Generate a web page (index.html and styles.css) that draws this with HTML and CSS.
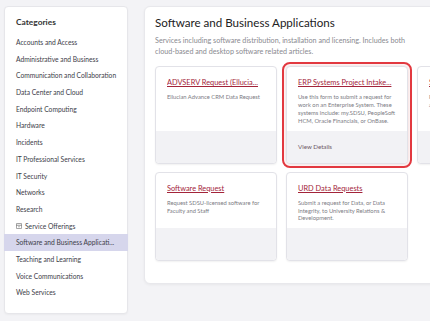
FILE: index.html
```html
<!DOCTYPE html>
<html>
<head>
<meta charset="utf-8">
<link rel="stylesheet" href="styles.css">
</head>
<body>
<div class="page">
  <aside class="sidebar">
    <h2 class="side-title">Categories</h2>
    <ul class="cat-list">
      <li class="cat">Accounts and Access</li>
      <li class="cat">Administrative and Business</li>
      <li class="cat">Communication and Collaboration</li>
      <li class="cat">Data Center and Cloud</li>
      <li class="cat">Endpoint Computing</li>
      <li class="cat">Hardware</li>
      <li class="cat">Incidents</li>
      <li class="cat">IT Professional Services</li>
      <li class="cat">IT Security</li>
      <li class="cat">Networks</li>
      <li class="cat">Research</li>
      <li class="cat"><svg class="cat-icon" viewBox="0 0 8 8" width="6" height="6"><rect x="0.5" y="0.5" width="7" height="7" rx="1" fill="none" stroke="#666" stroke-width="0.9"/><line x1="0.5" y1="3" x2="7.5" y2="3" stroke="#666" stroke-width="0.9"/><line x1="3" y1="5" x2="5" y2="5" stroke="#666" stroke-width="0.9"/></svg>Service Offerings</li>
      <li class="cat cat-active">Software and Business Applicati...</li>
      <li class="cat">Teaching and Learning</li>
      <li class="cat">Voice Communications</li>
      <li class="cat">Web Services</li>
    </ul>
  </aside>
  <main class="content">
    <h1 class="content-title">Software and Business Applications</h1>
    <p class="content-desc">Services including software distribution, installation and licensing. Includes both cloud-based and desktop software related articles.</p>
    <div class="grid">
      <div class="card">
        <div class="card-body">
          <a class="card-title">ADVSERV Request (Ellucia...</a>
          <p class="card-desc">Ellucian Advance CRM Data Request</p>
        </div>
        <div class="card-foot"></div>
      </div>
      <div class="card card-marked">
        <div class="card-body">
          <a class="card-title">ERP Systems Project Intake...</a>
          <p class="card-desc">Use this form to submit a request for work on an Enterprise System. These systems include: my.SDSU, PeopleSoft HCM, Oracle Financials, or OnBase.</p>
        </div>
        <div class="card-foot"><span class="view">View Details</span></div>
      </div>
      <div class="card">
        <div class="card-body">
          <a class="card-title">Software Licensing</a>
          <p class="card-desc">Request software licensing information and purchasing help for departments.</p>
        </div>
        <div class="card-foot"></div>
      </div>
      <div class="card">
        <div class="card-body">
          <a class="card-title">Software Request</a>
          <p class="card-desc">Request SDSU-licensed software for Faculty and Staff</p>
        </div>
        <div class="card-foot"></div>
      </div>
      <div class="card">
        <div class="card-body">
          <a class="card-title">URD Data Requests</a>
          <p class="card-desc">Submit a request for Data, or Data Integrity, to University Relations &amp; Development.</p>
        </div>
        <div class="card-foot"></div>
      </div>
    </div>
  </main>
</div>
</body>
</html>
```
FILE: styles.css
```css
* { box-sizing: border-box; }
html, body { margin: 0; padding: 0; }
body {
  background: #f3f3f6;
  font-family: Lato, "Open Sans", sans-serif;
  width: 430px;
  height: 321px;
  overflow: hidden;
}
.page {
  display: flex;
  align-items: flex-start;
  gap: 16px;
  padding: 6px 0 0 4px;
}
.sidebar {
  flex: 0 0 124px;
  height: 308px;
  background: #fff;
  border: 1px solid #e6e6ea;
  border-radius: 4px;
  padding: 8px 0 0;
  box-shadow: 0 1px 2px rgba(0,0,0,0.04);
}
.side-title {
  margin: 0 0 5px;
  padding-left: 11px;
  font-size: 8.4px;
  line-height: 14px;
  font-weight: 700;
  color: #333;
}
.cat-list { list-style: none; margin: 0; padding: 0; }
.cat {
  height: 16.7px;
  line-height: 16.7px;
  padding-left: 11px;
  font-size: 6.7px;
  color: #3d3d48;
  white-space: nowrap;
  overflow: hidden;
  display: flex;
  align-items: center;
}
.cat-icon { margin-right: 3px; }
.cat-active { background: #d6d6ec; margin: 0 -1px; padding-left: 12px; }
.content {
  flex: 0 0 410px;
  height: 278px;
  background: #fff;
  border: 1px solid #e8e8ec;
  border-radius: 6px;
  padding: 8px 10px 0;
  box-shadow: 0 1px 3px rgba(0,0,0,0.05);
}
.content-title {
  margin: 0;
  font-size: 11.6px;
  line-height: 16px;
  font-weight: 400;
  color: #222;
}
.content-desc {
  margin: 4px 0 0;
  font-size: 7.2px;
  line-height: 11px;
  color: #8a8a90;
  width: 266px;
}
.grid {
  margin-top: 9px;
  display: grid;
  grid-template-columns: 122px 122px 122px;
  column-gap: 9px;
  row-gap: 8px;
  align-items: stretch;
}
.card {
  display: flex;
  flex-direction: column;
  background: #fff;
  border: 1px solid #e2e2e8;
  border-radius: 4px;
  box-shadow: 0 1px 2px rgba(0,0,0,0.06);
}
.card-marked {
  outline: 2px solid #e2383f;
  outline-offset: 2px;
  box-shadow: 0 0 4px rgba(200,40,40,0.25);
}
.card-body {
  flex: 1;
  padding: 9px 10px 6px 11px;
}
.card-title {
  display: block;
  font-size: 7.4px;
  line-height: 14px;
  color: #a3243a;
  text-decoration: underline;
  white-space: nowrap;
  overflow: hidden;
}
.card-desc {
  margin: 3px 0 0;
  font-size: 5.8px;
  line-height: 7.9px;
  color: #7c7c84;
}
.card-foot {
  height: 32px;
  background: #f2f2f5;
  border-radius: 0 0 4px 4px;
  padding: 0 11px;
  display: flex;
  align-items: center;
}
.view {
  font-size: 6.2px;
  color: #6e5866;
}
```
